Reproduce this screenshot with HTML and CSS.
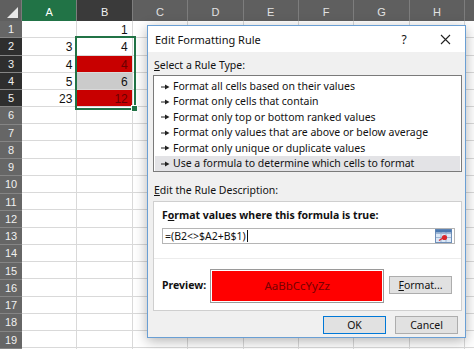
FILE: index.html
```html
<!DOCTYPE html>
<html lang="en">
<head>
    <meta charset="UTF-8">
    <title>Edit Formatting Rule</title>
    <link rel="stylesheet" href="styles.css">
</head>
<body>
    <div class="sheet">
        <!-- Заголовки столбцов -->
        <div class="col-heads">
            <div class="corner"></div>
            <div class="ch ch-active">A</div>
            <div class="ch ch-sel">B</div>
            <div class="ch">C</div>
            <div class="ch">D</div>
            <div class="ch">E</div>
            <div class="ch">F</div>
            <div class="ch">G</div>
            <div class="ch">H</div>
            <div class="ch"></div>
        </div>
        <div class="sheet-body">
            <div class="row-heads">
                <div class="rh">1</div>
                <div class="rh rh-sel">2</div>
                <div class="rh rh-sel">3</div>
                <div class="rh rh-sel">4</div>
                <div class="rh rh-sel">5</div>
                <div class="rh">6</div>
                <div class="rh">7</div>
                <div class="rh">8</div>
                <div class="rh">9</div>
                <div class="rh">10</div>
                <div class="rh">11</div>
                <div class="rh">12</div>
                <div class="rh">13</div>
                <div class="rh">14</div>
                <div class="rh">15</div>
                <div class="rh">16</div>
                <div class="rh">17</div>
                <div class="rh">18</div>
                <div class="rh">19</div>
            </div>
            <div class="cells">
                <div class="c"></div><div class="c">1</div><div class="c"></div><div class="c"></div><div class="c"></div><div class="c"></div><div class="c"></div><div class="c"></div><div class="c"></div>
                <div class="c">3</div><div class="c">4</div><div class="c"></div><div class="c"></div><div class="c"></div><div class="c"></div><div class="c"></div><div class="c"></div><div class="c"></div>
                <div class="c">4</div><div class="c c-red">4</div><div class="c"></div><div class="c"></div><div class="c"></div><div class="c"></div><div class="c"></div><div class="c"></div><div class="c"></div>
                <div class="c">5</div><div class="c c-gray">6</div><div class="c"></div><div class="c"></div><div class="c"></div><div class="c"></div><div class="c"></div><div class="c"></div><div class="c"></div>
                <div class="c">23</div><div class="c c-red">12</div><div class="c"></div><div class="c"></div><div class="c"></div><div class="c"></div><div class="c"></div><div class="c"></div><div class="c"></div>
                <div class="filler"></div>
                <div class="selection"><span class="handle"></span></div>
            </div>
        </div>
    </div>

    <!-- Диалог -->
    <div class="dialog">
        <div class="title-bar">
            <span class="title">Edit Formatting Rule</span>
            <span class="tb-btn help">?</span>
            <span class="tb-btn close">
                <svg width="11" height="11" viewBox="0 0 11 11"><path d="M1 1L10 10M10 1L1 10" stroke="#222" stroke-width="1.1"/></svg>
            </span>
        </div>
        <div class="dialog-body">
            <div class="label"><u>S</u>elect a Rule Type:</div>
            <div class="rule-list">
                <div class="rule"><svg class="arr" width="9" height="6" viewBox="0 0 9 6"><path d="M0 3H5" stroke="#222" stroke-width="1"/><path d="M4 0.5L8.5 3L4 5.5Z" fill="#222"/></svg>Format all cells based on their values</div>
                <div class="rule"><svg class="arr" width="9" height="6" viewBox="0 0 9 6"><path d="M0 3H5" stroke="#222" stroke-width="1"/><path d="M4 0.5L8.5 3L4 5.5Z" fill="#222"/></svg>Format only cells that contain</div>
                <div class="rule"><svg class="arr" width="9" height="6" viewBox="0 0 9 6"><path d="M0 3H5" stroke="#222" stroke-width="1"/><path d="M4 0.5L8.5 3L4 5.5Z" fill="#222"/></svg>Format only top or bottom ranked values</div>
                <div class="rule"><svg class="arr" width="9" height="6" viewBox="0 0 9 6"><path d="M0 3H5" stroke="#222" stroke-width="1"/><path d="M4 0.5L8.5 3L4 5.5Z" fill="#222"/></svg>Format only values that are above or below average</div>
                <div class="rule"><svg class="arr" width="9" height="6" viewBox="0 0 9 6"><path d="M0 3H5" stroke="#222" stroke-width="1"/><path d="M4 0.5L8.5 3L4 5.5Z" fill="#222"/></svg>Format only unique or duplicate values</div>
                <div class="rule rule-sel"><svg class="arr" width="9" height="6" viewBox="0 0 9 6"><path d="M0 3H5" stroke="#222" stroke-width="1"/><path d="M4 0.5L8.5 3L4 5.5Z" fill="#222"/></svg>Use a formula to determine which cells to format</div>
            </div>
            <div class="label label-desc"><u>E</u>dit the Rule Description:</div>
            <div class="desc-box">
                <div class="desc-top">
                    <div class="bold-label">F<u>o</u>rmat values where this formula is true:</div>
                    <div class="formula">
                        <span class="formula-text">=(B2&lt;&gt;$A2+B$1)<span class="caret"></span></span>
                        <svg class="ref-icon" width="17" height="14" viewBox="0 0 17 14">
                            <rect x="0.5" y="0.5" width="16" height="13" fill="#dbe8f7" stroke="#6f8fb8"/>
                            <path d="M1 4.5H16M1 8.5H16M6 1V13M11 1V13" stroke="#9fb6d4" stroke-width="1"/>
                            <rect x="0.5" y="0.5" width="16" height="3" fill="#4a78b0"/>
                            <circle cx="9.5" cy="8.5" r="2.6" fill="#d9262c"/>
                            <path d="M4 11.5L8 9" stroke="#d9262c" stroke-width="1.4"/>
                        </svg>
                    </div>
                </div>
                <div class="preview-row">
                    <span class="bold-label">Preview:</span>
                    <div class="preview"><div class="preview-fill">AaBbCcYyZz</div></div>
                    <button class="btn btn-format"><u>F</u>ormat...</button>
                </div>
            </div>
            <div class="actions">
                <button class="btn btn-ok">OK</button>
                <button class="btn">Cancel</button>
            </div>
        </div>
    </div>
</body>
</html>
```

FILE: styles.css
```css
body {
    margin: 0;
    padding: 0;
    width: 474px;
    height: 349px;
    overflow: hidden;
    background-color: #fff;
    font-family: "Liberation Sans", Arial, sans-serif;
    position: relative;
}
.sheet {
    --cw: 55.4px;
    --rh: 17.25px;
}
.col-heads {
    display: flex;
    height: 21px;
    background-color: #5f5f5f;
}
.corner {
    width: 22px;
    flex: none;
    position: relative;
    border-right: 1px solid #7a7a7a;
    box-sizing: border-box;
}
.corner::after {
    content: "";
    position: absolute;
    right: 3px;
    bottom: 3px;
    border-style: solid;
    border-width: 0 0 11px 11px;
    border-color: transparent transparent #e8e8e8 transparent;
}
.ch {
    width: var(--cw);
    flex: none;
    box-sizing: border-box;
    border-right: 1px solid #7d7d7d;
    color: #e2e2e2;
    font-size: 11px;
    display: flex;
    align-items: center;
    justify-content: center;
    padding-top: 2px;
}
.ch-active {
    background-color: #217346;
    color: #fff;
}
.ch-sel {
    background-color: #3a3a3a;
    color: #f2f2f2;
}
.sheet-body {
    display: flex;
}
.row-heads {
    width: 22px;
    flex: none;
    background-color: #666;
}
.rh {
    height: var(--rh);
    box-sizing: border-box;
    border-bottom: 1px solid #858585;
    color: #f0f0f0;
    font-size: 11px;
    display: flex;
    align-items: center;
    justify-content: center;
}
.rh-sel {
    background-color: #2e2e2e;
}
.cells {
    position: relative;
    display: grid;
    grid-template-columns: repeat(9, var(--cw));
    grid-auto-rows: var(--rh);
}
.c {
    box-sizing: border-box;
    border-right: 1px solid #d9d9d9;
    border-bottom: 1px solid #d9d9d9;
    font-size: 12px;
    color: #111;
    text-align: right;
    padding: 2px 4px 0 0;
    line-height: 14px;
}
.c-red {
    background-color: #c80000;
    color: #6a0000;
}
.c-gray {
    background-color: #cbcbcb;
}
.filler {
    grid-column: 1 / -1;
    height: calc(var(--rh) * 14);
    background-image:
        repeating-linear-gradient(to right, transparent 0 calc(var(--cw) - 1px), #d9d9d9 calc(var(--cw) - 1px) var(--cw)),
        repeating-linear-gradient(to bottom, transparent 0 calc(var(--rh) - 1px), #d9d9d9 calc(var(--rh) - 1px) var(--rh));
}
.selection {
    position: absolute;
    left: calc(var(--cw) - 2px);
    top: calc(var(--rh) - 2px);
    width: calc(var(--cw) + 1px);
    height: calc(var(--rh) * 4 + 1px);
    border: 2px solid #217346;
    box-sizing: content-box;
    margin: -0.5px 0 0 0;
}
.handle {
    position: absolute;
    right: -4px;
    bottom: -4px;
    width: 5px;
    height: 5px;
    background-color: #217346;
    border: 1px solid #fff;
}

/* Диалог */
.dialog {
    position: absolute;
    left: 147px;
    top: 25px;
    width: 319px;
    height: 313px;
    box-sizing: border-box;
    border: 1px solid #6a9fd4;
    background-color: #f0f0f0;
    box-shadow: 0 3px 12px rgba(0, 0, 0, 0.3);
    font-family: "Noto Sans", "Open Sans", sans-serif;
    font-size: 10.5px;
    color: #111;
    display: flex;
    flex-direction: column;
}
.title-bar {
    height: 26px;
    flex: none;
    background-color: #fff;
    display: flex;
    align-items: center;
    padding-left: 7px;
    font-size: 11px;
}
.title {
    flex: 1;
}
.tb-btn {
    width: 40px;
    display: flex;
    justify-content: center;
    align-items: center;
}
.help {
    font-size: 12px;
    margin-right: 1px;
}
.dialog-body {
    padding: 5px 3px 0 5px;
    display: flex;
    flex-direction: column;
}
.label {
    height: 17px;
    line-height: 17px;
    padding-left: 1px;
}
.rule-list {
    margin-top: 1px;
    height: 97px;
    box-sizing: border-box;
    border: 1px solid #7a7a7a;
    background-color: #fff;
    padding: 3px 1px 0 1px;
}
.rule {
    height: 15.4px;
    line-height: 15.4px;
    display: flex;
    align-items: center;
    padding-left: 6px;
}
.rule-sel {
    background-color: #e3e3e6;
}
.arr {
    margin-right: 3px;
}
.label-desc {
    margin-top: 10px;
}
.desc-box {
    margin-top: 2px;
    height: 110px;
    box-sizing: border-box;
    border: 1px solid #cfcfcf;
    background-color: #fff;
    display: flex;
    flex-direction: column;
}
.desc-top {
    padding: 5px 6px 0 8px;
    height: 57px;
    box-sizing: border-box;
    border-bottom: 1px solid #ececec;
}
.bold-label {
    font-weight: bold;
    line-height: 16px;
}
.formula {
    margin-top: 5px;
    height: 16px;
    box-sizing: border-box;
    border: 1px solid #b5b5b5;
    display: flex;
    align-items: center;
    padding-left: 2px;
}
.formula-text {
    flex: 1;
    display: flex;
    align-items: center;
}
.caret {
    display: inline-block;
    width: 1px;
    height: 12px;
    background-color: #111;
    margin-left: 1px;
}
.ref-icon {
    margin-right: 2px;
}
.preview-row {
    flex: 1;
    display: flex;
    align-items: center;
    padding: 0 9px 0 8px;
}
.preview {
    margin-left: 4px;
    width: 174px;
    height: 34px;
    box-sizing: border-box;
    border: 1px solid #9a9a9a;
    padding: 1px;
    background-color: #fff;
    margin-top: 2px;
}
.preview-fill {
    height: 100%;
    background-color: #ff0000;
    color: #780000;
    display: flex;
    align-items: center;
    justify-content: center;
    font-size: 11.5px;
}
.btn {
    font-family: "Noto Sans", "Open Sans", sans-serif;
    font-size: 10.5px;
    color: #111;
    width: 63px;
    height: 18px;
    padding: 0;
    background-color: #e1e1e1;
    border: 1px solid #adadad;
    box-sizing: border-box;
}
.btn-format {
    margin-left: auto;
}
.actions {
    display: flex;
    justify-content: flex-end;
    gap: 9px;
    margin-top: 5px;
    padding-right: 4px;
}
.btn-ok {
    border: 1px solid #0078d7;
}
```
